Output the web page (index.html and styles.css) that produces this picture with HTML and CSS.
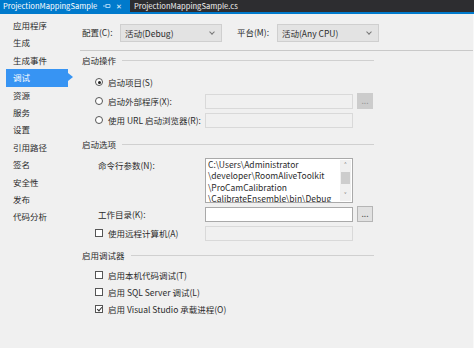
FILE: index.html
```html
<!DOCTYPE html>
<html lang="zh-CN">
<head>
  <meta charset="UTF-8" />
  <title>ProjectionMappingSample</title>
  <link rel="stylesheet" href="styles.css">
</head>
<body>

  <div class="tabbar">
    <div class="tab active">
      <span class="tab-name">ProjectionMappingSample</span>
      <svg class="pin" width="8" height="6" viewBox="0 0 8 6">
        <path d="M0 3h3M3 1v4M3 1.5h4v3H3" fill="none" stroke="#9fd0f5" stroke-width="1"/>
      </svg>
      <span class="close">✕</span>
    </div>
    <div class="tab">ProjectionMappingSample.cs</div>
  </div>

  <div class="page">
    <ul class="nav">
      <li>应用程序</li>
      <li>生成</li>
      <li>生成事件</li>
      <li class="selected">调试</li>
      <li>资源</li>
      <li>服务</li>
      <li>设置</li>
      <li>引用路径</li>
      <li>签名</li>
      <li>安全性</li>
      <li>发布</li>
      <li>代码分析</li>
    </ul>

    <div class="main">
      <div class="config">
        <span class="cfg-label">配置(C):</span>
        <div class="select">活动(Debug)<span class="chev"></span></div>
        <span class="cfg-label plat">平台(M):</span>
        <div class="select">活动(Any CPU)<span class="chev"></span></div>
      </div>

      <div class="form">
        <div class="section">启动操作</div>

        <div class="row r-first">
          <span class="radio on"></span>
          <span class="label">启动项目(S)</span>
        </div>
        <div class="row">
          <span class="radio"></span>
          <span class="label wide">启动外部程序(X):</span>
          <div class="field disabled"></div>
          <div class="dots disabled">...</div>
        </div>
        <div class="row">
          <span class="radio"></span>
          <span class="label wide">使用 URL 启动浏览器(R):</span>
          <div class="field disabled"></div>
        </div>

        <div class="section s2">启动选项</div>

        <div class="row cmd">
          <span class="label plain">命令行参数(N):</span>
          <div class="textarea">
            <div class="ta-text">C:\Users\Administrator<br>\developer\RoomAliveToolkit<br>\ProCamCalibration<br>\CalibrateEnsemble\bin\Debug</div>
            <div class="scroll">
              <span class="arr">˄</span>
              <span class="thumb"></span>
              <span class="arr">˅</span>
            </div>
          </div>
        </div>
        <div class="row">
          <span class="label plain">工作目录(K):</span>
          <div class="field"></div>
          <div class="dots">...</div>
        </div>
        <div class="row">
          <span class="check"></span>
          <span class="label wide">使用远程计算机(A)</span>
          <div class="field disabled"></div>
        </div>

        <div class="section s3">启用调试器</div>

        <div class="row r-cb">
          <span class="check"></span>
          <span class="label">启用本机代码调试(T)</span>
        </div>
        <div class="row r-cb">
          <span class="check"></span>
          <span class="label">启用 SQL Server 调试(L)</span>
        </div>
        <div class="row r-cb">
          <span class="check on"></span>
          <span class="label">启用 Visual Studio 承载进程(O)</span>
        </div>
      </div>
    </div>
  </div>

</body>
</html>
```

FILE: styles.css
```css
* { box-sizing: border-box; }

body {
  margin: 0;
  width: 474px;
  height: 348px;
  overflow: hidden;
  background: #f0f0f0;
  color: #2b2b2b;
  font-family: "Noto Sans CJK SC", "Noto Sans", sans-serif;
  font-size: 8.5px;
}

.tabbar {
  display: flex;
  height: 14px;
  background: #2d2d30;
  border-bottom: 2px solid #007acc;
}

.tab {
  display: flex;
  align-items: center;
  padding: 0 4px;
  color: #f1f1f1;
  font-size: 7.6px;
  line-height: 12px;
  white-space: nowrap;
}

.tab.active {
  width: 130px;
  background: #007acc;
  color: #fff;
  padding-left: 3px;
}

.tab-name { flex: 1; }
.pin { margin-right: 5px; flex-shrink: 0; }
.close { font-size: 7px; color: #e8f3fb; margin-right: 4px; }

.page {
  display: flex;
  height: 334px;
  border-right: 1px solid #f8f8f8;
}

.nav {
  list-style: none;
  margin: 0;
  padding: 3px 0 0 6px;
  width: 80px;
  flex-shrink: 0;
}

.nav li {
  height: 17.4px;
  line-height: 17.4px;
  padding-left: 7px;
  width: 62px;
  position: relative;
}

.nav li.selected {
  background: #3794f3;
  color: #fff;
}

.nav li.selected::after {
  content: "";
  position: absolute;
  right: -5px;
  top: 4px;
  border-left: 5px solid #3794f3;
  border-top: 4.5px solid transparent;
  border-bottom: 4.5px solid transparent;
}

.main { flex: 1; }

.config {
  display: flex;
  align-items: center;
  height: 37px;
  padding: 0 0 0 2px;
  border-bottom: 1px solid #c9c9c9;
}

.cfg-label { width: 38px; }
.cfg-label.plat { width: 40px; margin-left: 15px; }

.select {
  position: relative;
  width: 102px;
  height: 18px;
  line-height: 16px;
  padding-left: 4px;
  background: #e3e3e3;
  border: 1px solid #cfcfcf;
  margin-top: 1px;
}

.chev {
  position: absolute;
  right: 7px;
  top: 5px;
  width: 4px;
  height: 4px;
  border-right: 1px solid #777;
  border-bottom: 1px solid #777;
  transform: rotate(45deg);
}

.form {
  width: 294px;
  padding-left: 2px;
}

.section {
  display: flex;
  align-items: center;
  height: 18px;
  gap: 6px;
}

.section::after {
  content: "";
  flex: 1;
  border-top: 1px solid #d0d0d0;
}

.s2 { margin-top: 7px; }
.s3 { margin-top: 5px; }

.row {
  display: flex;
  align-items: center;
  height: 16px;
  margin-top: 3px;
  padding-left: 13px;
  white-space: nowrap;
}

.row.r-first { margin-top: 5px; }
.row.r-cb { margin-top: 1px; }
.s3 + .row.r-cb { margin-top: 3px; }

.radio {
  width: 8px;
  height: 8px;
  border: 1px solid #555;
  border-radius: 50%;
  background: #fff;
  margin-right: 5px;
  position: relative;
  flex-shrink: 0;
}

.radio.on::after {
  content: "";
  position: absolute;
  left: 1.5px;
  top: 1.5px;
  width: 3px;
  height: 3px;
  border-radius: 50%;
  background: #222;
}

.check {
  width: 8px;
  height: 8px;
  border: 1px solid #555;
  background: #fff;
  margin-right: 5px;
  position: relative;
  flex-shrink: 0;
}

.check.on::after {
  content: "";
  position: absolute;
  left: 2px;
  top: 0;
  width: 2px;
  height: 4px;
  border-right: 1px solid #333;
  border-bottom: 1px solid #333;
  transform: rotate(40deg);
}

.label.wide { width: 97px; flex-shrink: 0; }
.label.plain { width: 110px; padding-left: 3px; flex-shrink: 0; }

.field {
  width: 148px;
  height: 15px;
  background: #fff;
  border: 1px solid #a9a9a9;
}

.field.disabled {
  background: #f0f0f0;
  border-color: #d9d9d9;
}

.dots {
  width: 16px;
  height: 16px;
  margin-left: 4px;
  background: #e1e1e1;
  border: 1px solid #b5b5b5;
  text-align: center;
  line-height: 12px;
  color: #555;
}

.dots.disabled {
  background: #cccccc;
  border-color: #cccccc;
  color: #999;
}

.row.cmd {
  align-items: flex-start;
  height: 45px;
  margin-top: 5px;
}

.row.cmd .label { margin-top: 1px; }

.textarea {
  display: flex;
  width: 148px;
  height: 45px;
  background: #fff;
  border: 1px solid #a9a9a9;
  overflow: hidden;
}

.ta-text {
  flex: 1;
  padding: 0 0 0 2px;
  line-height: 11.3px;
  white-space: nowrap;
  overflow: hidden;
}

.scroll {
  width: 11px;
  display: flex;
  flex-direction: column;
  align-items: center;
  background: #f0f0f0;
  margin: 1px 1px 1px 0;
}

.arr {
  height: 11px;
  line-height: 11px;
  font-size: 8px;
  color: #606060;
}

.thumb {
  width: 9px;
  height: 12px;
  background: #cdcdcd;
  margin-top: 1px;
  flex: 0 0 12px;
}

.scroll .arr:last-child { margin-top: auto; }
```
